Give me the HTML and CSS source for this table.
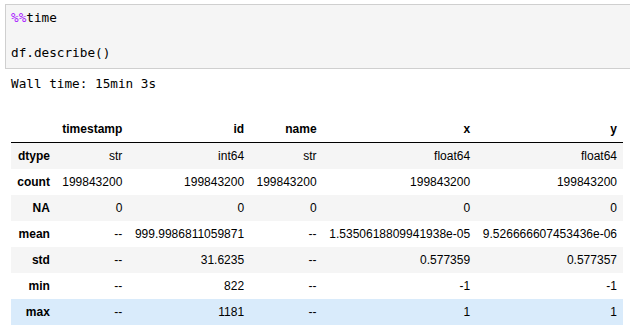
FILE: index.html
```html
<!DOCTYPE html>
<html>
<head>
<meta charset="utf-8">
<link rel="stylesheet" href="styles.css">
</head>
<body>
<div class="cell">
  <div class="input"><span class="magic">%%</span>time

df.describe()</div>
  <div class="output">
    <div class="stdout">Wall time: 15min 3s</div>
    <table class="df">
      <thead>
        <tr><th></th><th>timestamp</th><th>id</th><th>name</th><th>x</th><th>y</th></tr>
      </thead>
      <tbody>
        <tr><th>dtype</th><td>str</td><td>int64</td><td>str</td><td>float64</td><td>float64</td></tr>
        <tr><th>count</th><td>199843200</td><td>199843200</td><td>199843200</td><td>199843200</td><td>199843200</td></tr>
        <tr><th>NA</th><td>0</td><td>0</td><td>0</td><td>0</td><td>0</td></tr>
        <tr><th>mean</th><td>--</td><td>999.9986811059871</td><td>--</td><td>1.5350618809941938e-05</td><td>9.526666607453436e-06</td></tr>
        <tr><th>std</th><td>--</td><td>31.6235</td><td>--</td><td>0.577359</td><td>0.577357</td></tr>
        <tr><th>min</th><td>--</td><td>822</td><td>--</td><td>-1</td><td>-1</td></tr>
        <tr class="hover"><th>max</th><td>--</td><td>1181</td><td>--</td><td>1</td><td>1</td></tr>
      </tbody>
    </table>
  </div>
</div>
</body>
</html>
```
FILE: styles.css
```css
html, body {
  margin: 0;
  padding: 0;
  background: #fff;
}
body {
  padding: 4px 0 0 5px;
  font-family: "Liberation Sans", Arial, sans-serif;
  color: #000;
}
.input {
  background: #f5f5f5;
  border: 1px solid #cfcfcf;
  border-right: none;
  padding: 4px 0 6px 5px;
  font-family: "DejaVu Sans Mono", "Liberation Mono", monospace;
  font-size: 12.7px;
  line-height: 17.5px;
  color: #000;
  white-space: pre;
}
.magic {
  color: #aa22ff;
}
.output {
  padding-left: 6px;
}
.stdout {
  margin-top: 6px;
  font-family: "DejaVu Sans Mono", "Liberation Mono", monospace;
  font-size: 12.7px;
  line-height: 17.5px;
  color: #000;
}
.df {
  width: 612px;
  margin-top: 24px;
  border: none;
  border-collapse: collapse;
  border-spacing: 0;
  font-size: 12px;
  color: #000;
}
.df th, .df td {
  text-align: right;
  vertical-align: middle;
  padding: 6px;
  line-height: 14px;
  white-space: nowrap;
  border: none;
}
.df th {
  font-weight: bold;
}
.df thead {
  border-bottom: 1px solid #000;
}
.df thead th {
  vertical-align: bottom;
}
.df tbody tr:nth-child(odd) {
  background: #f5f5f5;
}
.df tbody tr.hover {
  background: #d9ebfb;
}
```
